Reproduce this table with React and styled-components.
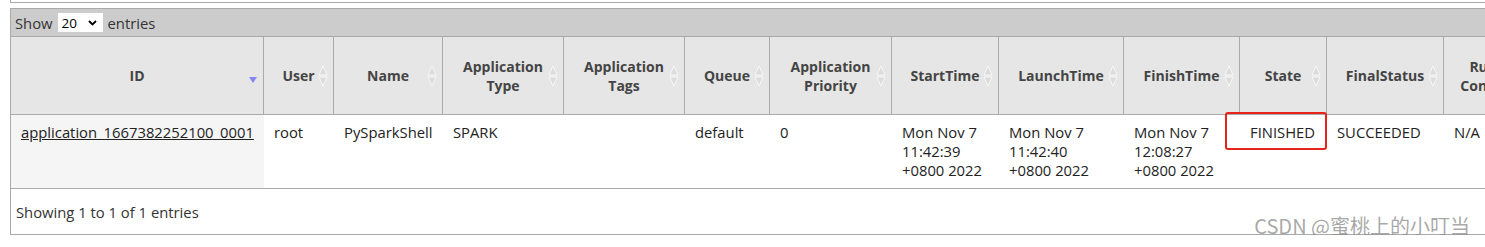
import React from "react";
import styled, { createGlobalStyle } from "styled-components";

const GlobalStyle = createGlobalStyle`
  html, body {
    margin: 0;
    background: #fff;
    overflow: hidden;
  }
  body {
    font-family: "Open Sans", "Noto Sans", sans-serif;
    font-size: 14.8px;
    color: #222;
  }
`;

const COLUMNS = [253, 70, 109, 121, 121, 85, 122, 107, 125, 116, 87, 117, 110];

const Page = styled.div`
  position: relative;
  padding-left: 10px;
`;

const TopPanel = styled.div`
  width: 1600px;
  height: 2px;
  border-left: 1px solid #aaa;
  border-bottom: 1px solid #aaa;
  margin-bottom: 5px;
`;

const Wrapper = styled.div`
  width: 1600px;
  border: 1px solid #aaa;
`;

const Toolbar = styled.div`
  display: flex;
  align-items: center;
  height: 27px;
  padding-left: 4px;
  background: #ccc;
  color: #333;
  border-bottom: 1px solid #aaa;
`;

const LengthSelect = styled.div`
  display: flex;
  align-items: center;
  justify-content: space-between;
  width: 45px;
  height: 19px;
  margin: 0 5px 0 5px;
  padding: 0 6px 0 4px;
  box-sizing: border-box;
  background: #fff;
  color: #000;
  font-size: 13.5px;
`;

const Grid = styled.div`
  display: grid;
  grid-template-columns: ${COLUMNS.map((w) => `${w}px`).join(" ")};
`;

const HeadCell = styled.div`
  position: relative;
  display: flex;
  align-items: center;
  justify-content: center;
  height: 78px;
  padding: 0 10px;
  box-sizing: border-box;
  background: #e6e6e6;
  border-right: 1px solid #aaa;
  border-bottom: 1px solid #aaa;
  color: #444;
  font-size: 14px;
  font-weight: bold;
  line-height: 19px;
  text-align: center;
`;

const SortIcon = styled.svg`
  position: absolute;
  right: 5px;
  top: 50%;
  transform: translateY(-50%);
`;

const Cell = styled.div`
  position: relative;
  height: 74px;
  padding: 8px 10px;
  box-sizing: border-box;
  background: ${(p) => (p.$sorted ? "#f5f5f5" : "#fff")};
  border-bottom: 1px solid #aaa;
  line-height: 19px;
  white-space: nowrap;
`;

const AppLink = styled.a`
  color: #222;
  text-decoration: underline;
`;

const Highlight = styled.div`
  position: absolute;
  left: -15px;
  top: -3px;
  width: 102px;
  height: 38px;
  box-sizing: border-box;
  border: 2px solid #e8231b;
  border-radius: 3px;
`;

const Footer = styled.div`
  display: flex;
  align-items: center;
  height: 45px;
  padding-left: 5px;
  color: #333;
`;

const Watermark = styled.div`
  position: absolute;
  right: 15px;
  top: 212px;
  font-family: "Noto Sans CJK SC", "Noto Sans", sans-serif;
  font-size: 20px;
  line-height: 28px;
  color: rgba(140, 140, 140, 0.75);
  white-space: nowrap;
`;

function SortBoth() {
  return (
    <SortIcon width="10" height="22" viewBox="0 0 10 22">
      <path d="M5 1 L9 10 L1 10 Z" fill="#dcdcdc" stroke="#f8f8f8" strokeWidth="1" />
      <path d="M1 12 L9 12 L5 21 Z" fill="#dcdcdc" stroke="#f8f8f8" strokeWidth="1" />
    </SortIcon>
  );
}

function SortDesc() {
  return (
    <SortIcon width="10" height="22" viewBox="0 0 10 22">
      <path d="M1 12 L9 12 L5 18 Z" fill="#8585f5" />
    </SortIcon>
  );
}

const headers = [
  "User",
  "Name",
  "Application Type",
  "Application Tags",
  "Queue",
  "Application Priority",
  "StartTime",
  "LaunchTime",
  "FinishTime",
  "State",
  "FinalStatus",
  "Running Containers",
];

function Chevron() {
  return (
    <svg width="9" height="6" viewBox="0 0 9 6">
      <path d="M1 1 L4.5 4.5 L8 1" fill="none" stroke="#000" strokeWidth="1.8" />
    </svg>
  );
}

export default function App() {
  return (
    <>
      <GlobalStyle />
      <Page>
        <TopPanel />
        <Wrapper>
          <Toolbar>
            Show
            <LengthSelect>
              20
              <Chevron />
            </LengthSelect>
            entries
          </Toolbar>
          <Grid>
            <HeadCell>
              ID
              <SortDesc />
            </HeadCell>
            {headers.map((h) => (
              <HeadCell key={h}>
                {h}
                <SortBoth />
              </HeadCell>
            ))}

            <Cell $sorted>
              <AppLink href="#">application_1667382252100_0001</AppLink>
            </Cell>
            <Cell>root</Cell>
            <Cell>PySparkShell</Cell>
            <Cell>SPARK</Cell>
            <Cell />
            <Cell>default</Cell>
            <Cell>0</Cell>
            <Cell>
              Mon Nov 7
              <br />
              11:42:39
              <br />
              +0800 2022
            </Cell>
            <Cell>
              Mon Nov 7
              <br />
              11:42:40
              <br />
              +0800 2022
            </Cell>
            <Cell>
              Mon Nov 7
              <br />
              12:08:27
              <br />
              +0800 2022
            </Cell>
            <Cell>
              FINISHED
              <Highlight />
            </Cell>
            <Cell>SUCCEEDED</Cell>
            <Cell>N/A</Cell>
          </Grid>
          <Footer>Showing 1 to 1 of 1 entries</Footer>
        </Wrapper>
        <Watermark>CSDN @蜜桃上的小叮当</Watermark>
      </Page>
    </>
  );
}
